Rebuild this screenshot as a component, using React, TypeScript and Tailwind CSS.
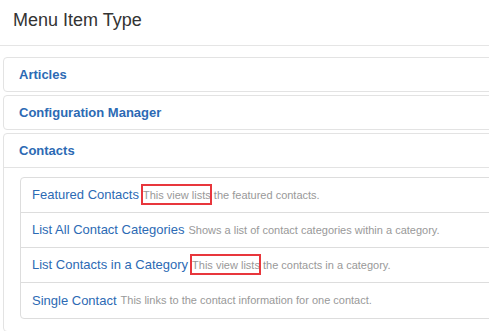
const groups = ["Articles", "Configuration Manager"];

const contactItems = [
  { title: "Featured Contacts", desc: "the featured contacts.", mark: true },
  { title: "List All Contact Categories", desc: "Shows a list of contact categories within a category.", mark: false },
  { title: "List Contacts in a Category", desc: "the contacts in a category.", mark: true },
  { title: "Single Contact", desc: "This links to the contact information for one contact.", mark: false },
];

function Marked({ children }: { children: string }) {
  return (
    <span className="relative">
      {children}
      <span className="pointer-events-none absolute -top-[5px] -bottom-[4px] -left-[2px] -right-[1px] border-2 border-[#e8363c]" />
    </span>
  );
}

export default function App() {
  return (
    <div
      className="h-[331px] w-[489px] overflow-hidden bg-white text-[#333]"
      style={{ fontFamily: '"Liberation Sans", Arial, sans-serif' }}
    >
      <div className="h-[46px] border-b border-[#e5e5e5] px-[13px] pt-[8px]">
        <h3 className="text-[18px] leading-[24px] text-[#333]">Menu Item Type</h3>
      </div>

      <div className="-mr-[20px] pl-[3px] pt-[11px]">
        {groups.map((g) => (
          <div key={g} className="mb-[3px] rounded-[4px] border border-[#e3e3e3]">
            <div className="flex h-[33px] items-center px-[15px] text-[13px] font-bold text-[#2c6ab4]">
              {g}
            </div>
          </div>
        ))}

        <div className="rounded-[4px] border border-[#e3e3e3] pb-[12px]">
          <div className="flex h-[34px] items-center border-b border-[#e3e3e3] px-[15px] text-[13px] font-bold text-[#2c6ab4]">
            Contacts
          </div>
          <div className="pl-[16px] pt-[9px]">
            <ul className="rounded-[4px] border border-[#dddddd]">
              {contactItems.map((item, i) => (
                <li
                  key={item.title}
                  className={`flex h-[35px] items-center whitespace-nowrap px-[11px] ${
                    i < contactItems.length - 1 ? "border-b border-[#dddddd]" : ""
                  }`}
                >
                  <span className="text-[13px] text-[#2c6ab4]">{item.title}</span>
                  <span className="ml-[4px] text-[11px] text-[#999]">
                    {item.mark ? (
                      <>
                        <Marked>This view lists</Marked> {item.desc}
                      </>
                    ) : (
                      item.desc
                    )}
                  </span>
                </li>
              ))}
            </ul>
          </div>
        </div>
      </div>
    </div>
  );
}
